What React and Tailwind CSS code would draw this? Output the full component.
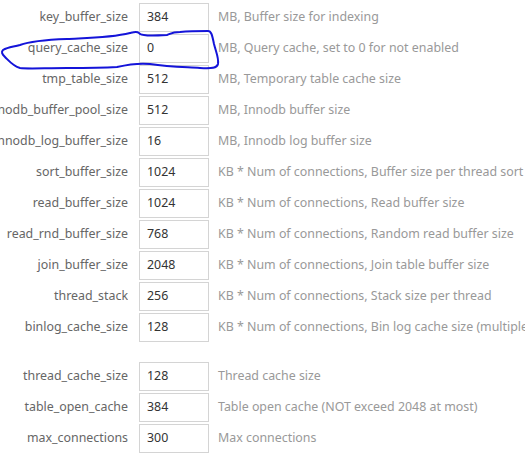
import React from "react";

const group1 = [
  ["key_buffer_size", "384", "MB, Buffer size for indexing"],
  ["query_cache_size", "0", "MB, Query cache, set to 0 for not enabled"],
  ["tmp_table_size", "512", "MB, Temporary table cache size"],
  ["innodb_buffer_pool_size", "512", "MB, Innodb buffer size"],
  ["innodb_log_buffer_size", "16", "MB, Innodb log buffer size"],
  ["sort_buffer_size", "1024", "KB * Num of connections, Buffer size per thread sort"],
  ["read_buffer_size", "1024", "KB * Num of connections, Read buffer size"],
  ["read_rnd_buffer_size", "768", "KB * Num of connections, Random read buffer size"],
  ["join_buffer_size", "2048", "KB * Num of connections, Join table buffer size"],
  ["thread_stack", "256", "KB * Num of connections, Stack size per thread"],
  ["binlog_cache_size", "128", "KB * Num of connections, Bin log cache size (multiples of 4096)"],
];

const group2 = [
  ["thread_cache_size", "128", "Thread cache size"],
  ["table_open_cache", "384", "Table open cache (NOT exceed 2048 at most)"],
  ["max_connections", "300", "Max connections"],
];

function Row({ label, value, desc }) {
  return (
    <div className="flex h-[31px] items-center whitespace-nowrap">
      <div className="flex w-[128px] shrink-0 justify-end overflow-hidden text-[#666]">
        <span>{label}</span>
      </div>
      <div className="ml-[11px] flex h-[29px] w-[70px] shrink-0 items-center border border-[#d4d4d4] bg-white pl-[7px] text-[#333]">
        {value}
      </div>
      <div className="ml-[9px] text-[#999]">{desc}</div>
    </div>
  );
}

export default function App() {
  return (
    <div
      className="relative h-[468px] w-[525px] overflow-hidden bg-white pt-[2px] text-[12.4px]"
      style={{ fontFamily: '"Noto Sans", "Open Sans", sans-serif' }}
    >
      <div className="flex flex-col">
        {group1.map(([l, v, d]) => (
          <Row key={l} label={l} value={v} desc={d} />
        ))}
      </div>
      <div className="mt-[18px] flex flex-col">
        {group2.map(([l, v, d]) => (
          <Row key={l} label={l} value={v} desc={d} />
        ))}
      </div>
      <svg
        className="pointer-events-none absolute left-0 top-0"
        width="525"
        height="468"
        viewBox="0 0 525 468"
        fill="none"
      >
        <path
          d="M3 50 C8 47 13 47 20 45 C28 42 40 40 67 39 C85 38 110 38 130 33 C134 32 137 31 139 33 C141 36 150 36 167 35 C170 34 172 32 180 32 C190 31 200 31 208 31 C211 31 212 34 214 44 C216 52 219 58 218 64 C217 68 212 69 200 68 C185 67 170 67 150 64 C140 63 130 64 117 67 C100 68 80 68 67 68 C45 68 28 69 20 68 C13 66 10 62 5 57 C2 54 1 52 3 50 Z"
          stroke="#1414d9"
          strokeWidth="2"
          strokeLinejoin="round"
        />
      </svg>
    </div>
  );
}
